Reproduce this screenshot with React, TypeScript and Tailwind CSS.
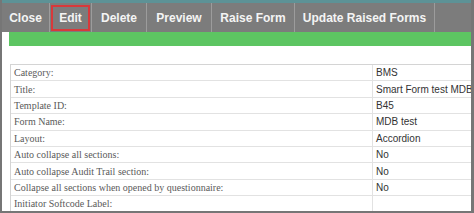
import React from 'react';

const actions = [
  { label: 'Close', w: 'w-[48px]' },
  { label: 'Edit', w: 'w-[42px]', active: true },
  { label: 'Delete', w: 'w-[55px]' },
  { label: 'Preview', w: 'w-[65px]' },
  { label: 'Raise Form', w: 'w-[83px]' },
  { label: 'Update Raised Forms', w: 'w-[140px]' },
];

const rows: [string, string][] = [
  ['Category:', 'BMS'],
  ['Title:', 'Smart Form test MDB'],
  ['Template ID:', 'B45'],
  ['Form Name:', 'MDB test'],
  ['Layout:', 'Accordion'],
  ['Auto collapse all sections:', 'No'],
  ['Auto collapse Audit Trail section:', 'No'],
  ['Collapse all sections when opened by questionnaire:', 'No'],
  ['Initiator Softcode Label:', ''],
];

export default function App() {
  return (
    <div className="w-[474px] h-[213px] overflow-hidden bg-white flex flex-col border-l-2 border-r-[3px] border-b-2 border-[#767676]">
      <div className="h-[3px] shrink-0 bg-[#5d9296]" />

      {/* toolbar */}
      <div className="h-[29px] shrink-0 flex bg-[#7c7c7c] font-['Liberation_Sans',Arial,sans-serif] text-[12px] font-bold text-[#f4f4f4]">
        {actions.map((a) => (
          <div
            key={a.label}
            className={`relative ${a.w} shrink-0 flex items-center justify-center border-r border-[#9c9c9c] whitespace-nowrap`}
          >
            {a.label}
            {a.active && (
              <div className="absolute left-[1px] right-[1px] top-[2px] bottom-[1px] border-2 border-[#d8393b]" />
            )}
          </div>
        ))}
      </div>

      <div className="h-[14px] shrink-0 ml-[7px] bg-[#5dc562]" />

      {/* details table */}
      <div className="mt-[18px] ml-[8px] w-[520px] border-l border-t border-[#d4d4d4]">
        {rows.map(([label, value]) => (
          <div key={label} className="flex h-[16.4px] border-b border-[#e2e2e2]">
            <div className="w-[361px] shrink-0 pl-[3px] flex items-center font-['Liberation_Serif','Times_New_Roman',serif] text-[10px] text-[#5a5a5a] whitespace-nowrap">
              {label}
            </div>
            <div className="flex-1 pl-[3px] flex items-center border-l border-[#e2e2e2] font-['Liberation_Sans',Arial,sans-serif] text-[10px] text-[#333] whitespace-nowrap">
              {value}
            </div>
          </div>
        ))}
      </div>
    </div>
  );
}
